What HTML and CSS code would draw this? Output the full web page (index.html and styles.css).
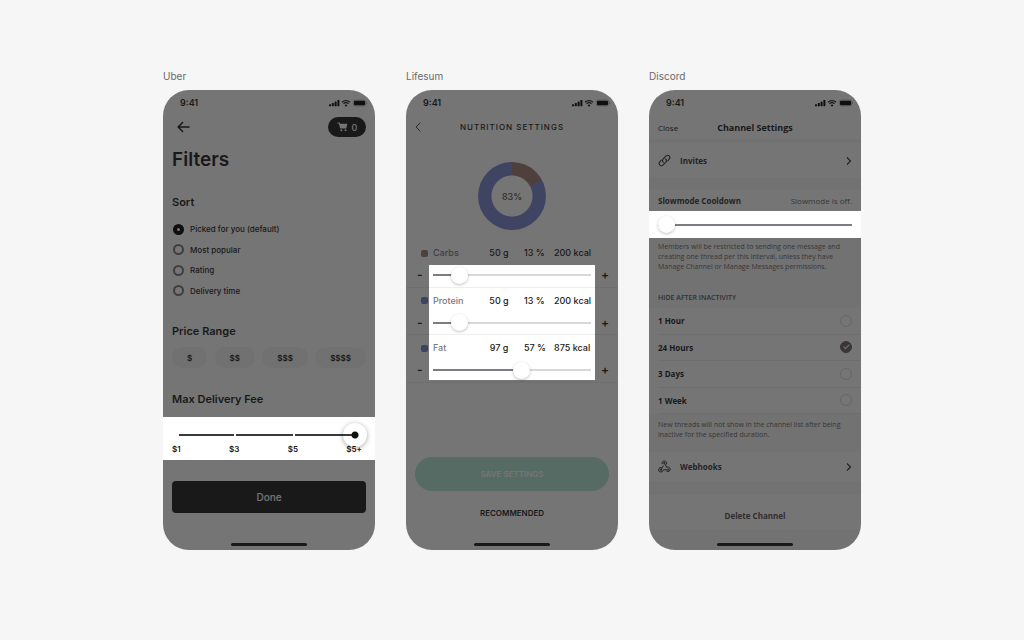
FILE: index.html
```html
<!DOCTYPE html>
<html lang="en">
<head>
    <meta charset="UTF-8" />
    <meta name="viewport" content="width=device-width, initial-scale=1.0" />
    <title>Slider patterns</title>
    <link rel="stylesheet" href="styles.css">
</head>
<body>
<svg width="0" height="0" class="sprite" aria-hidden="true">
    <symbol id="status-icons" viewBox="0 0 40 10">
        <rect x="1" y="6.3" width="2" height="2" rx=".5"/>
        <rect x="3.8" y="5" width="2" height="3.3" rx=".5"/>
        <rect x="6.6" y="3.5" width="2" height="4.8" rx=".5"/>
        <rect x="9.4" y="2" width="2" height="6.3" rx=".5"/>
        <path d="M14 4.2a5.8 5.8 0 0 1 8 0M15.5 5.9a3.6 3.6 0 0 1 5 0" fill="none" stroke="currentColor" stroke-width="1.2"/>
        <path d="M18 8.8l-1.4-1.6a1.9 1.9 0 0 1 2.8 0z"/>
        <rect x="25.3" y="2" width="12.4" height="6" rx="1.7" fill="none" stroke="currentColor" stroke-width=".5" opacity=".5"/>
        <rect x="26" y="2.7" width="11" height="4.6" rx="1.1"/>
        <path d="M38.3 4.2v1.9q.9-.3.9-1t-.9-.9z" opacity=".5"/>
    </symbol>
    <symbol id="chevron" viewBox="0 0 6 10">
        <path d="M1 1.5L4.5 5 1 8.5" fill="none" stroke="currentColor" stroke-width="1.2"/>
    </symbol>
</svg>

<main class="gallery">
    <!-- Uber -->
    <figure>
        <figcaption>Uber</figcaption>
        <section class="phone uber">
            <div class="status"><span>9:41</span><svg><use href="#status-icons"/></svg></div>
            <header class="nav">
                <button class="icon-btn" aria-label="Back">
                    <svg width="13" height="12" viewBox="0 0 13 12"><path d="M12.5 6H1.5M6 1L1.2 6 6 11" fill="none" stroke="currentColor" stroke-width="1.5"/></svg>
                </button>
                <button class="cart" aria-label="Cart, 0 items">
                    <svg width="11" height="10" viewBox="0 0 11 10"><path d="M.5 1h1.8l1.3 5h5.6" fill="none" stroke="currentColor" stroke-width="1.1"/><path d="M2.5 1.8H10.4L9.3 6H3.6z"/><circle cx="4.3" cy="8.2" r="1"/><circle cx="8.5" cy="8.2" r="1"/></svg>
                    <span>0</span>
                </button>
            </header>
            <h1>Filters</h1>
            <h2>Sort</h2>
            <div class="sort-list">
                <label><input type="radio" name="sort" checked>Picked for you (default)</label>
                <label><input type="radio" name="sort">Most popular</label>
                <label><input type="radio" name="sort">Rating</label>
                <label><input type="radio" name="sort">Delivery time</label>
            </div>
            <h2 class="price-title">Price Range</h2>
            <div class="prices">
                <button>$</button>
                <button>$$</button>
                <button>$$$</button>
                <button>$$$$</button>
            </div>
            <h2 class="fee-title" id="fee-label">Max Delivery Fee</h2>
            <div class="fee spotlight">
                <input type="range" min="0" max="3" value="3" aria-labelledby="fee-label">
                <div class="fee-marks"><span>$1</span><span>$3</span><span>$5</span><span>$5+</span></div>
            </div>
            <button class="done">Done</button>
            <div class="home-bar"></div>
        </section>
    </figure>

    <!-- Lifesum -->
    <figure>
        <figcaption>Lifesum</figcaption>
        <section class="phone lifesum">
            <div class="status"><span>9:41</span><svg><use href="#status-icons"/></svg></div>
            <header class="nav">
                <button class="icon-btn" aria-label="Back">
                    <svg width="6" height="10" viewBox="0 0 6 10"><path d="M5.4.6L1 5l4.4 4.4" fill="none" stroke="currentColor" stroke-width=".9"/></svg>
                </button>
                <h1>NUTRITION SETTINGS</h1>
            </header>
            <div class="donut"><span>83%</span></div>
            <div class="macros spotlight">
                <div class="macro carbs">
                    <div class="macro-info"><label for="carbs">Carbs</label><span>50 g</span><span>13 %</span><span>200 kcal</span></div>
                    <div class="macro-slider">
                        <button aria-label="Less carbs">-</button>
                        <input type="range" id="carbs" value="13" style="--value: 13%">
                        <button aria-label="More carbs">+</button>
                    </div>
                </div>
                <div class="macro protein">
                    <div class="macro-info"><label for="protein">Protein</label><span>50 g</span><span>13 %</span><span>200 kcal</span></div>
                    <div class="macro-slider">
                        <button aria-label="Less protein">-</button>
                        <input type="range" id="protein" value="13" style="--value: 13%">
                        <button aria-label="More protein">+</button>
                    </div>
                </div>
                <div class="macro fat">
                    <div class="macro-info"><label for="fat">Fat</label><span>97 g</span><span>57 %</span><span>875 kcal</span></div>
                    <div class="macro-slider">
                        <button aria-label="Less fat">-</button>
                        <input type="range" id="fat" value="57" style="--value: 57%">
                        <button aria-label="More fat">+</button>
                    </div>
                </div>
            </div>
            <button class="save">SAVE SETTINGS</button>
            <button class="recommended">RECOMMENDED</button>
            <div class="home-bar"></div>
        </section>
    </figure>

    <!-- Discord -->
    <figure>
        <figcaption>Discord</figcaption>
        <section class="phone discord">
            <div class="status"><span>9:41</span><svg><use href="#status-icons"/></svg></div>
            <header class="nav">
                <button class="close">Close</button>
                <h1>Channel Settings</h1>
            </header>
            <a href="#" class="link-row">
                <svg width="13" height="13" viewBox="0 0 13 13" fill="none" stroke="currentColor" stroke-width="1.1" stroke-linecap="round"><path d="M5.3 8.1a2.3 2.3 0 0 1-.1-3.2l2.6-2.8a2.3 2.3 0 0 1 3.4 3.1L9.8 6.8"/><path d="M7.6 5a2.3 2.3 0 0 1 .2 3.2l-2.6 2.7a2.3 2.3 0 0 1-3.4-3.1l1.4-1.6"/></svg>
                <span>Invites</span>
                <svg class="chevron"><use href="#chevron"/></svg>
            </a>
            <div class="slowmode">
                <label for="slowmode">Slowmode Cooldown</label>
                <output for="slowmode">Slowmode is off.</output>
            </div>
            <div class="slowmode-slider spotlight">
                <input type="range" id="slowmode" value="0">
            </div>
            <p class="note">Members will be restricted to sending one message and creating one thread per this interval, unless they have Manage Channel or Manage Messages permissions.</p>
            <h2>HIDE AFTER INACTIVITY</h2>
            <div class="hide-list">
                <label>1 Hour<input type="radio" name="hide"></label>
                <label>24 Hours<input type="radio" name="hide" checked></label>
                <label>3 Days<input type="radio" name="hide"></label>
                <label>1 Week<input type="radio" name="hide"></label>
            </div>
            <p class="note note-threads">New threads will not show in the channel list after being inactive for the specified duration.</p>
            <a href="#" class="link-row webhooks">
                <svg width="13" height="13" viewBox="0 0 13 13" fill="none" stroke="currentColor" stroke-width="1"><path d="M4.2 4.1a2.3 2.3 0 1 1 4.2.2M6.4 3.2l2.3 4.1a2.3 2.3 0 1 1-.4 3.7M8.8 9.8H5.2M3.5 7.5a2.3 2.3 0 1 0 1.7 2.7M3 9.7l2.4-4.2"/><circle cx="6.3" cy="3.1" r=".7"/><circle cx="3" cy="9.8" r=".7"/><circle cx="10" cy="9.6" r=".7"/></svg>
                <span>Webhooks</span>
                <svg class="chevron"><use href="#chevron"/></svg>
            </a>
            <button class="delete">Delete Channel</button>
            <div class="home-bar"></div>
        </section>
    </figure>
</main>
</body>
</html>
```

FILE: styles.css
```css
:root {
    --page: #f6f6f6;
    --ink: #191919;
    --scrim: rgba(25, 25, 25, 0.6);
    --font: Inter, sans-serif;
}

*, *::before, *::after { box-sizing: border-box; margin: 0; }

body {
    font-family: var(--font);
    background: var(--page);
    color: var(--ink);
    padding: 68px 16px 16px;
}
.sprite { position: absolute; }

button {
    font: inherit; color: inherit;
    background: none; border: 0; padding: 0;
    cursor: pointer;
}
button svg { display: block; fill: currentColor; }
a { color: inherit; text-decoration: none; }

.gallery {
    display: grid; grid-template-columns: repeat(3, 1fr);
    gap: 31px;
    max-width: 698px; margin: 0 auto;
}
figcaption {
    font-size: 10px; line-height: 16px; color: #6a6a6a;
    margin-bottom: 6px;
}

.phone {
    display: flex; flex-direction: column;
    min-height: 460px;
    border-radius: 26px;
    background: #fff;
    overflow: hidden;
    font-size: 8px;
}
.status {
    display: flex; justify-content: space-between; align-items: center;
    height: 25px; padding: 0 7px 0 17px;
    font-size: 9px; font-weight: 600;
}
.status svg { width: 40px; height: 10px; }
.nav {
    display: flex; align-items: center;
    height: 24px; padding: 0 9px;
}
.home-bar {
    width: 76px; height: 3px;
    margin: auto auto 4px;
    border-radius: 2px;
    background: var(--ink);
}

/* dims the phone around the highlighted control */
.spotlight { position: relative; }
.spotlight::after {
    content: ""; position: absolute; inset: 0; z-index: 1;
    box-shadow: 0 0 0 600px var(--scrim);
    pointer-events: none;
}

input[type="range"] {
    appearance: none; display: block;
    background: transparent; margin: 0;
    cursor: pointer;
}
input[type="range"]::-webkit-slider-thumb {
    appearance: none;
    width: 17px; height: 17px;
    border-radius: 50%;
    background: #fff;
    box-shadow: 0 1px 3px rgba(0, 0, 0, 0.25);
}
input[type="radio"] {
    appearance: none; margin: 0;
    border-radius: 50%;
}

/* Uber */
.uber .nav { justify-content: space-between; padding-left: 14px; }
.cart {
    display: flex; align-items: center; justify-content: center; gap: 4px;
    width: 38px; height: 20px;
    border-radius: 10px;
    background: var(--ink); color: #fff;
    font-size: 9px; font-weight: 500;
}
.uber h1 {
    padding: 0 9px;
    font-size: 19px; line-height: 42px; font-weight: 600;
}
.uber h2 {
    padding: 0 9px;
    font-size: 11px; line-height: 16px; font-weight: 600;
}
.uber h1 + h2 { margin: 13px 0 9px; }
.sort-list {
    display: grid; grid-auto-rows: 1fr;
    min-height: 82px; padding: 0 10px;
}
.sort-list label { display: flex; align-items: center; gap: 6px; font-weight: 500; }
.sort-list input { width: 11px; height: 11px; border: 2px solid #777; }
.sort-list input:checked { border: 4px solid #000; }
.uber .price-title { margin: 22px 0 8px; }
.prices { display: flex; justify-content: space-between; padding: 0 9px; }
.prices button {
    height: 21px; padding: 0 15px;
    border-radius: 11px;
    background: #f4f4f4;
    font-weight: 600;
}
.uber .fee-title { margin: 23px 0 10px; }
.fee { height: 43px; padding: 5px 8px 0 3px; background: #fff; }
.fee input {
    width: 100%; height: 25px;
    background:
        linear-gradient(#fff, #fff) 34% 50% / 2px 4px no-repeat,
        linear-gradient(#fff, #fff) 64% 50% / 2px 4px no-repeat,
        linear-gradient(#3a3a3a, #3a3a3a) 50% 50% / calc(100% - 25px) 2px no-repeat;
}
.fee input::-webkit-slider-thumb {
    width: 24px; height: 24px;
    background: radial-gradient(circle, #111 3px, transparent 4px), linear-gradient(#3a3a3a, #3a3a3a) 0 50% / 12px 2px no-repeat, #fff;
    box-shadow: 0 1px 5px rgba(0, 0, 0, 0.35);
}
.fee-marks {
    display: flex; justify-content: space-between;
    padding: 0 5px 0 6px; line-height: 4px; font-weight: 600;
}
.done {
    height: 32px; margin: 21px 9px 0;
    border-radius: 4px;
    background: var(--ink); color: #fff;
    font-size: 10px; font-weight: 500;
}

/* Lifesum */
.lifesum .nav h1 {
    flex: 1; margin-right: 6px;
    font-size: 8px; font-weight: 500; letter-spacing: 1px;
    text-align: center;
}
.lifesum .icon-btn { color: #333; }
.donut {
    display: grid; place-items: center;
    width: 68px; height: 68px;
    margin: 23px auto 10px;
    border-radius: 50%;
    background: radial-gradient(circle, #fff 20px, transparent 21px), conic-gradient(#a07a74 17%, #7985d2 0);
    font-size: 9px; font-weight: 500; color: #554a4a;
}
.macros {
    display: grid; grid-auto-rows: 1fr;
    min-height: 143px; margin-bottom: 74px;
}
.macros::after { inset: 25px 23px 3px; }
.macro { padding-top: 2px; border-bottom: 1px solid #eee; }
.macro-info {
    display: grid; grid-template-columns: 1fr 30px 20px 36px; gap: 10px;
    padding: 0 28px 0 15px;
    line-height: 22px; text-align: center; white-space: nowrap;
    font-size: 9px; font-weight: 500;
}
.macro-info label { display: flex; align-items: center; gap: 5px; color: #77777d; }
.macro-info label::before {
    content: ""; width: 7px; height: 7px;
    border-radius: 2px;
    background: #7c83c4;
}
.carbs label::before { background: #a07a74; }
.macro-slider {
    display: grid; grid-template-columns: 18px 1fr 18px;
    align-items: center;
    height: 22px; padding: 0 9px;
    font-size: 12px; line-height: 16px; font-weight: 600;
}
.macro-slider button:first-child { text-align: left; padding-left: 2px; }
.macro-slider button:last-child { text-align: right; }
.macro-slider input {
    width: 100%; height: 17px;
    background:
        linear-gradient(#7c7c82, #7c7c82) 0 50% / var(--value) 2px no-repeat,
        linear-gradient(#d8d8dc, #d8d8dc) 0 50% / 100% 2px no-repeat;
}
.save {
    height: 34px; margin: 0 9px;
    border-radius: 17px;
    background: #b0e6d2; color: #fff;
    font-weight: 600;
}
.recommended { margin-top: 14px; line-height: 16px; font-weight: 600; }

/* Discord */
.discord { background: #f7f7f8; font-family: "Open Sans", sans-serif; }
.discord .status { background: #fff; font-family: var(--font); }
.discord .nav { background: #fff; }
.discord .close { flex: 1; text-align: left; font-weight: 500; }
.discord .nav h1 { font-size: 9px; font-weight: 700; }
.discord .nav::after { content: ""; flex: 1; }
.link-row {
    display: flex; align-items: center; gap: 9px;
    height: 35px; margin-top: 4px; padding: 0 9px;
    background: #fff;
    font-weight: 700; color: #333;
}
.chevron { width: 6px; height: 10px; margin-left: auto; }
.slowmode {
    display: flex; justify-content: space-between; align-items: center;
    height: 22px; margin-top: 11px; padding: 0 9px;
    background: #fff;
}
.slowmode label { font-weight: 700; color: #333; }
.slowmode output { color: #666; }
.slowmode-slider { height: 27px; padding: 5px 9px; background: #fff; }
.slowmode-slider input {
    width: 100%; height: 17px;
    background: linear-gradient(#7c7c82, #7c7c82) 0 50% / 100% 2px no-repeat;
}
.note {
    padding: 4px 9px 0;
    font-size: 7px; line-height: 10px; color: #666;
}
.discord h2 {
    margin: 20px 0 4px; padding: 0 9px;
    font-size: 7px; line-height: 12px; font-weight: 600; color: #555;
}
.hide-list {
    display: grid; grid-auto-rows: 1fr;
    min-height: 106px; padding-left: 9px;
    background: #fff;
    font-weight: 700;
}
.hide-list label {
    display: flex; justify-content: space-between; align-items: center;
    padding-right: 9px;
    border-bottom: 1px solid #eee;
}
.hide-list input { display: grid; place-items: center; width: 12px; height: 12px; border: 1px solid #ddd8d9; }
.hide-list input:checked { background: #6b6062; border-color: #6b6062; }
.hide-list input:checked::after {
    content: ""; width: 3px; height: 6px;
    margin-bottom: 2px;
    border: solid #fff; border-width: 0 1px 1px 0;
    transform: rotate(45deg);
}
.note-threads { padding-top: 6px; }
.webhooks { height: 29px; margin-top: 12px; }
.delete {
    height: 34px; margin-top: 14px; padding-top: 6px;
    background: #fff;
    font-weight: 700; color: #5a4a4c;
}
```
